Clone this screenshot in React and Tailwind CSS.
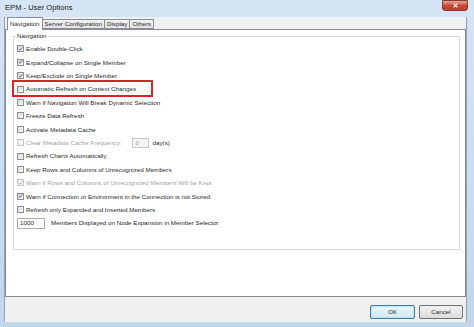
import React from "react";

const rows = [
  { label: "Enable Double-Click", checked: true },
  { label: "Expand/Collapse on Single Member", checked: true },
  { label: "Keep/Exclude on Single Member", checked: true },
  { label: "Automatic Refresh on Context Changes", highlight: true },
  { label: "Warn if Navigation Will Break Dynamic Selection" },
  { label: "Freeze Data Refresh" },
  { label: "Activate Metadata Cache" },
  { label: "Clear Metadata Cache Frequency:", disabled: true, frequency: true },
  { label: "Refresh Charts Automatically" },
  { label: "Keep Rows and Columns of Unrecognized Members" },
  { label: "Warn if Rows and Columns of Unrecognized Members Will be Kept", checked: true, disabled: true },
  { label: "Warn if Connection or Environment in the Connection is not Stored", checked: true },
  { label: "Refresh only Expanded and Inserted Members" },
];

const tabs = ["Navigation", "Server Configuration", "Display", "Others"];

const Checkbox = ({ checked, disabled }) => (
  <span
    className={`relative flex h-[7px] w-[7px] shrink-0 items-center justify-center border ${
      disabled ? "border-[#c4c4c4] bg-[#f4f4f4]" : "border-[#8e8f8f] bg-gradient-to-br from-[#d8d8d8] to-[#fbfbfb]"
    }`}
  >
    {checked && (
      <svg viewBox="0 0 8 8" className="h-[6px] w-[6px]">
        <path
          d="M1.3 4.2 L3.1 6.1 L6.8 1.2"
          fill="none"
          stroke={disabled ? "#a8a8a8" : "#3b4f7a"}
          strokeWidth="1.3"
        />
      </svg>
    )}
  </span>
);

const Row = ({ row }) => (
  <div className="relative flex h-[13.4px] items-center gap-[2px]">
    <Checkbox checked={row.checked} disabled={row.disabled} />
    <span className={row.disabled ? "text-[#a3a3a3]" : "text-[#2a2a2a]"}>{row.label}</span>
    {row.frequency && (
      <>
        <span className="ml-[8px] flex h-[10px] w-[17px] items-center border border-[#c9c9c9] bg-[#f4f4f4] pl-[3px] text-[#a3a3a3]">
          0
        </span>
        <span className="ml-[2px] text-[#2a2a2a]">day(s)</span>
      </>
    )}
    {row.highlight && (
      <span className="absolute left-[-5px] top-[-2px] h-[16.5px] w-[141px] border-[2.5px] border-[#d8232a]" />
    )}
  </div>
);

export default function App() {
  return (
    <div className="flex h-[327px] w-[474px] flex-col overflow-hidden bg-gradient-to-b from-[#d6e5f5] to-[#c2d6ec] font-['Liberation_Sans',Arial,sans-serif]">
      {/* title bar */}
      <div className="flex h-[17px] shrink-0 items-start justify-between">
        <span className="pl-[5px] pt-[3px] text-[7.6px] leading-[10px] text-[#1a1a1a]">EPM - User Options</span>
        <span className="mr-[6px] flex h-[11px] w-[26px] items-center justify-center rounded-b-[3px] border border-[#8a3a33] bg-gradient-to-b from-[#e8a493] via-[#c74a3a] to-[#c4382b]">
          <svg viewBox="0 0 8 8" className="h-[5px] w-[5px]">
            <path d="M1 1 L7 7 M7 1 L1 7" stroke="#fff" strokeWidth="1.8" />
          </svg>
        </span>
      </div>

      {/* dialog body */}
      <div className="ml-[4px] mr-[7px] flex flex-1 flex-col border-l border-r border-[#8da2bd] bg-[#f0f0f0]">
        {/* tabs */}
        <div className="flex h-[12px] shrink-0 items-end pl-[2px] text-[6.25px] text-[#2a2a2a]">
          {tabs.map((t, i) =>
            i === 0 ? (
              <span
                key={t}
                className="relative z-10 mb-[-1px] flex h-[13px] items-center border border-b-0 border-[#898c95] bg-white px-[2px]"
              >
                {t}
              </span>
            ) : (
              <span
                key={t}
                className="flex h-[10px] items-center border border-l-0 border-[#898c95] bg-gradient-to-b from-[#f2f2f2] to-[#e3e3e3] px-[2px]"
              >
                {t}
              </span>
            )
          )}
        </div>

        {/* tab panel */}
        <div className="h-[268px] shrink-0 border border-[#898c95] bg-white pl-[7px] pr-[5px] pt-[2px]">
          <fieldset className="h-[218px] border border-[#dcdcdc] px-[3px] pb-[3px] text-[6.25px]">
            <legend className="ml-[-1px] px-[1px] text-[6.25px] leading-[8px] text-[#2a2a2a]">Navigation</legend>
            <div className="mt-[2.3px] flex flex-col">
              {rows.map((r) => (
                <Row key={r.label} row={r} />
              ))}
              <div className="flex h-[13.4px] items-center">
                <span className="flex h-[11px] w-[28px] items-center border border-[#abadb3] bg-white pl-[2px] text-[#2a2a2a]">
                  1000
                </span>
                <span className="ml-[6px] text-[#2a2a2a]">Members Displayed on Node Expansion in Member Selector</span>
              </div>
            </div>
          </fieldset>
        </div>

        {/* footer */}
        <div className="flex flex-1 items-start justify-end gap-[4px] pr-[3px] pt-[8px] text-[6.25px] text-[#2a2a2a]">
          <button className="flex h-[14px] w-[45px] items-center justify-center rounded-[2px] border border-[#3c7fb1] bg-gradient-to-b from-[#eaf6fd] to-[#d3e9f5] shadow-[inset_0_0_0_1px_#bfe3f7]">
            OK
          </button>
          <button className="flex h-[14px] w-[44px] items-center justify-center rounded-[2px] border border-[#707070] bg-gradient-to-b from-[#f2f2f2] to-[#dcdcdc]">
            Cancel
          </button>
        </div>
      </div>
      <div className="h-[5px] shrink-0" />
    </div>
  );
}
